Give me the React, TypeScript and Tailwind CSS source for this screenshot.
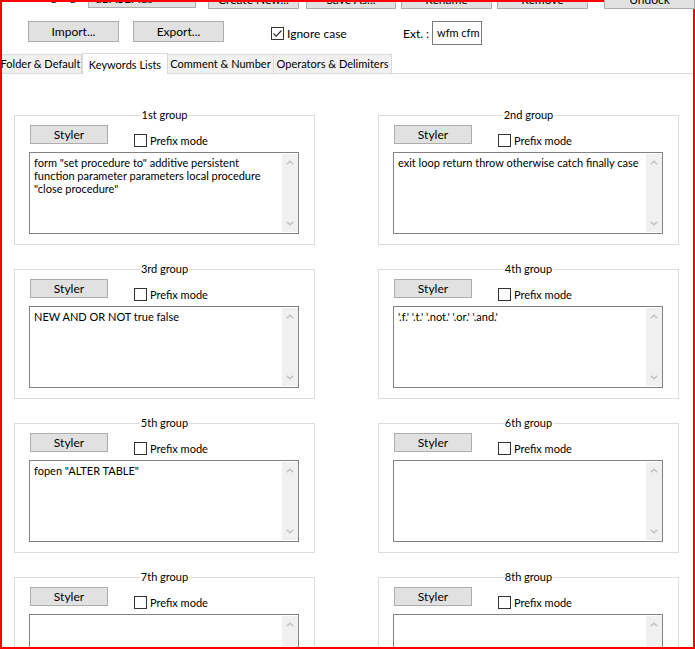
import React from "react";

const FONT = { fontFamily: "Lato, 'Liberation Sans', sans-serif" };

const GROUPS: { title: string; lines: string[] }[] = [
  {
    title: "1st group",
    lines: [
      'form "set procedure to" additive persistent',
      "function parameter parameters local procedure",
      '"close procedure"',
    ],
  },
  { title: "2nd group", lines: ["exit loop return throw otherwise catch finally case"] },
  { title: "3rd group", lines: ["NEW AND OR NOT true false"] },
  { title: "4th group", lines: ["'.f.' '.t.' '.not.' '.or.' '.and.'"] },
  { title: "5th group", lines: ['fopen "ALTER TABLE"'] },
  { title: "6th group", lines: [] },
  { title: "7th group", lines: [] },
  { title: "8th group", lines: [] },
];

function Checkbox({ checked = false }: { checked?: boolean }) {
  return (
    <span className="flex h-[13px] w-[13px] shrink-0 items-center justify-center border border-[#333333] bg-white">
      {checked && (
        <svg width="11" height="11" viewBox="0 0 11 11">
          <path d="M1.5 5.5 L4.2 8.2 L9.5 2.5" fill="none" stroke="#333333" strokeWidth="1.2" />
        </svg>
      )}
    </span>
  );
}

function WinButton({ label, className = "" }: { label: string; className?: string }) {
  return (
    <div
      className={`flex shrink-0 justify-center whitespace-nowrap border border-[#adadad] bg-[#e1e1e1] ${className}`}
    >
      {label}
    </div>
  );
}

function Chevron({ up }: { up?: boolean }) {
  return (
    <svg width="8" height="5" viewBox="0 0 8 5">
      <path
        d={up ? "M0.8 4.3 L4 1.2 L7.2 4.3" : "M0.8 0.7 L4 3.8 L7.2 0.7"}
        fill="none"
        stroke="#c2c2c2"
        strokeWidth="1.5"
      />
    </svg>
  );
}

function Group({ title, lines }: { title: string; lines: string[] }) {
  return (
    <fieldset className="border border-[#dcdcdc] pb-[10px]">
      <legend className="mx-auto h-[14px] px-[1px] leading-[14px]">{title}</legend>
      <div className="flex pt-[3px]">
        <WinButton label="Styler" className="ml-[15px] h-[19px] w-[78px] items-center text-[12px]" />
        <div className="ml-[26px] mt-[9px] flex h-[13px] items-center">
          <Checkbox />
          <span className="ml-[3px] whitespace-nowrap leading-[13px]">Prefix mode</span>
        </div>
      </div>
      <div className="ml-[14px] mt-[5px] flex h-[82px] w-[270px] border border-[#828282] bg-white">
        <div className="flex-1 whitespace-nowrap pl-[4px] pt-[3px] leading-[13px]">
          {lines.map((l) => (
            <div key={l}>{l}</div>
          ))}
        </div>
        <div className="my-[1px] flex w-[16px] shrink-0 flex-col items-center justify-between bg-[#f0f0f0] py-[6px]">
          <Chevron up />
          <Chevron />
        </div>
      </div>
    </fieldset>
  );
}

export default function App() {
  return (
    <div
      className="relative h-[649px] w-[695px] overflow-hidden bg-white text-[11px] text-black"
      style={FONT}
    >
      {/* Ligne du haut, coupée */}
      <div className="-mt-[14px] flex h-[23px] items-start text-[12px]">
        <div className="w-[88px] whitespace-nowrap pl-[8px] pt-[2px]">User language :</div>
        <div className="flex h-[22px] w-[135px] items-center border border-[#adadad] bg-[#e1e1e1] px-[6px] pt-[4px]">
          dBASEPlus
        </div>
        <WinButton label="Create New..." className="ml-[12px] h-[23px] w-[91px] items-center pt-[5px]" />
        <WinButton label="Save As..." className="ml-[7px] h-[23px] w-[90px] items-center pt-[5px]" />
        <WinButton label="Rename" className="ml-[5px] h-[23px] w-[91px] items-center pt-[5px]" />
        <WinButton label="Remove" className="ml-[5px] h-[23px] w-[91px] items-center pt-[5px]" />
        <WinButton label="Undock" className="relative z-10 ml-[16px] h-[23px] w-[91px] items-center pt-[5px]" />
      </div>

      {/* Import / Export */}
      <div className="mt-[12px] flex h-[24px] items-start">
        <WinButton label="Import..." className="ml-[28px] h-[21px] w-[91px] items-center text-[12px]" />
        <WinButton label="Export..." className="ml-[14px] h-[21px] w-[91px] items-center text-[12px]" />
        <div className="ml-[47px] mt-[6px] flex w-[132px] items-center">
          <Checkbox checked />
          <span className="ml-[3px] whitespace-nowrap text-[12px] leading-[13px]">Ignore case</span>
        </div>
        <div className="mt-[4px] w-[29px] whitespace-nowrap text-[12px]">Ext. :</div>
        <div className="flex h-[24px] w-[50px] items-center whitespace-nowrap border border-[#7a7a7a] pl-[4px]">
          wfm cfm
        </div>
      </div>

      {/* Onglets */}
      <div className="mt-[8px] flex h-[21px] items-end whitespace-nowrap border-b border-[#d9d9d9]">
        <div className="-ml-[4px] flex h-[19px] w-[86px] items-center justify-center border border-b-0 border-[#d9d9d9] bg-[#f0f0f0] pl-[3px]">
          Folder &amp; Default
        </div>
        <div className="relative z-10 -mb-px flex h-[21px] w-[86px] items-start justify-center border border-b-0 border-[#d9d9d9] bg-white pt-[3px]">
          Keywords Lists
        </div>
        <div className="flex h-[19px] w-[106px] items-center justify-center border border-b-0 border-l-0 border-[#d9d9d9] bg-[#f0f0f0]">
          Comment &amp; Number
        </div>
        <div className="flex h-[19px] w-[118px] items-center justify-center border border-b-0 border-l-0 border-[#d9d9d9] bg-[#f0f0f0]">
          Operators &amp; Delimiters
        </div>
      </div>

      {/* Groupes */}
      <div className="ml-[14px] mt-[34px] grid grid-cols-[301px_301px] gap-x-[63px] gap-y-[17px]">
        {GROUPS.map((g) => (
          <Group key={g.title} title={g.title} lines={g.lines} />
        ))}
      </div>

      {/* Cadre rouge */}
      <div className="pointer-events-none absolute inset-0 border-2 border-[#ff0000]" />
    </div>
  );
}
